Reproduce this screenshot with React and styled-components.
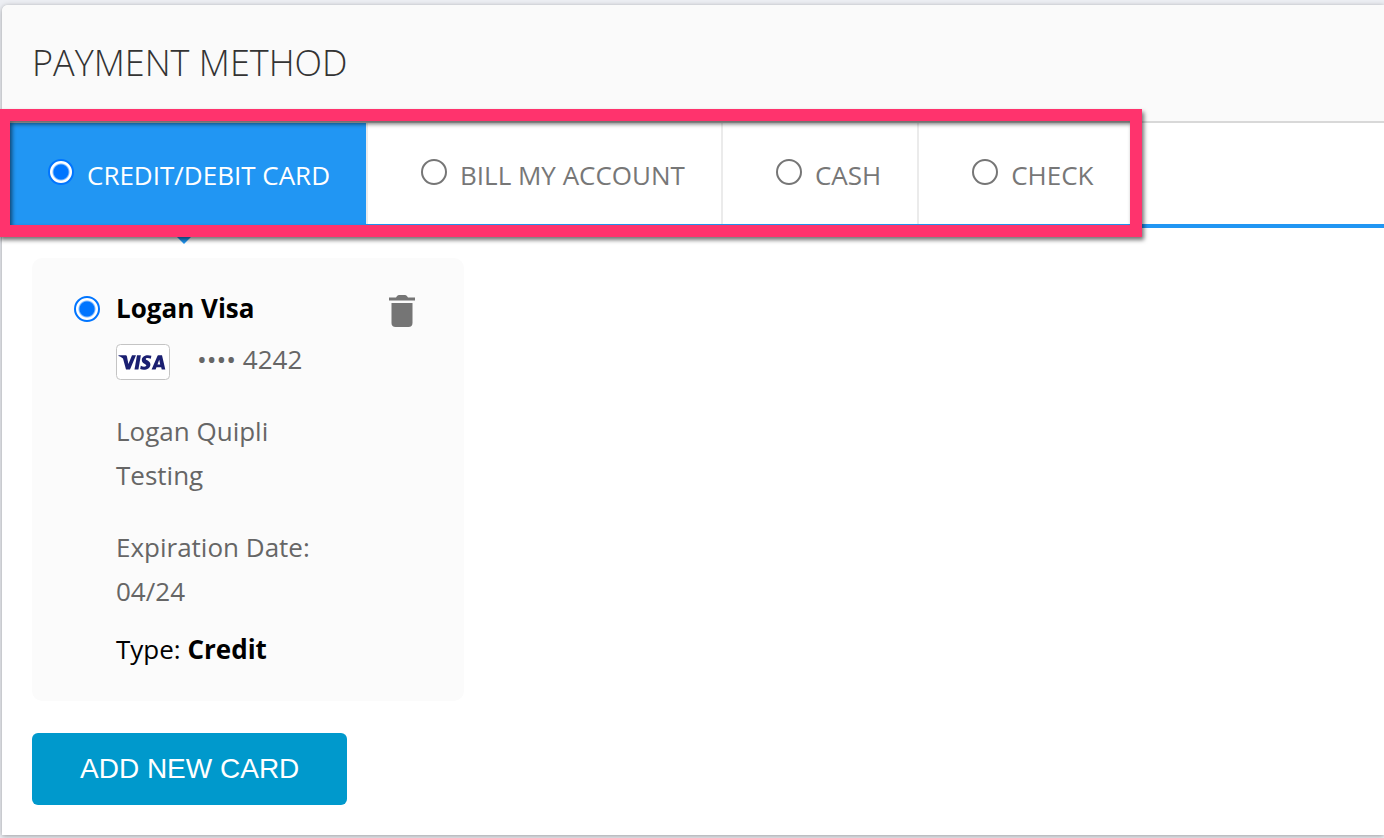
import React, { useState } from 'react';
import styled, { createGlobalStyle } from 'styled-components';

const GlobalStyle = createGlobalStyle`
	* {
		box-sizing: border-box;
	}
	body {
		margin: 0;
		background: #eceef3;
		font-family: "Open Sans", sans-serif;
		font-size: 26px;
		line-height: 44px;
		color: #666;
	}
`;

const Page = styled.main`
	padding: 5px 0 3px 2px;
	overflow: hidden;
`;

const Panel = styled.section`
	background: #fff;
	border-radius: 6px 0 0 0;
	box-shadow: 0 1px 5px rgba(0, 0, 0, 0.35);
`;

const PanelHeader = styled.header`
	background: #fafafa;
	border-bottom: 2px solid #d8d8d8;
	border-radius: 6px 0 0 0;
	padding: 36px 30px;
`;

const Title = styled.h2`
	margin: 0;
	font-size: 36px;
	line-height: 44px;
	font-weight: 300;
	color: #333;
	text-transform: uppercase;
`;

const TabBar = styled.div`
	position: relative;
	display: flex;
	border-bottom: 4px solid #2196f3;
`;

const Tab = styled.label`
	position: relative;
	display: flex;
	align-items: center;
	gap: 13px;
	height: 101px;
	padding: 3px 36px 0 53px;
	border-right: 2px solid #ebebeb;
	color: ${props => (props.$active ? '#fff' : '#777')};
	background: ${props => (props.$active ? '#2196f3' : '#fff')};
	background-clip: padding-box;
	text-transform: uppercase;
	white-space: nowrap;
	cursor: pointer;
	&:first-of-type {
		padding-left: 46px;
	}
	&:last-of-type {
		border-right: none;
	}
	&::after {
		content: "";
		display: ${props => (props.$active ? 'block' : 'none')};
		position: absolute;
		top: 100%;
		left: 50%;
		margin-left: -20px;
		border: 20px solid transparent;
		border-top-color: #2196f3;
		border-bottom: none;
	}
`;

const Radio = styled.input`
	appearance: none;
	flex: none;
	width: 26px;
	height: 26px;
	margin: 0;
	border: 2px solid #767676;
	border-radius: 50%;
	background: #fff;
	&:checked {
		border-color: #0075ff;
		background: radial-gradient(circle, #0075ff 7px, #fff 9px);
	}
`;

const TabRadio = styled(Radio)`
	margin-bottom: 6px;
`;

const Highlight = styled.div`
	position: absolute;
	top: -14px;
	left: -4px;
	width: 1144px;
	height: 128px;
	border: 12px solid #ff336d;
	filter: drop-shadow(2px 3px 2px rgba(0, 0, 0, 0.55));
	pointer-events: none;
`;

const PanelBody = styled.div`
	padding: 30px;
`;

const Card = styled.article`
	display: flex;
	align-items: flex-start;
	gap: 16px;
	width: 432px;
	max-width: 100%;
	padding: 28px 49px 30px 42px;
	background: #fbfbfb;
	border-radius: 10px;
`;

const CardRadio = styled(Radio)`
	margin-top: 10px;
`;

const Details = styled.div`
	flex: 1;
	min-width: 0;
`;

const CardName = styled.label`
	display: block;
	font-weight: 700;
	color: #000;
`;

const NumberRow = styled.div`
	display: flex;
	align-items: center;
	gap: 27px;
	margin: 7px 0 28px;
`;

const VisaLogo = styled.svg`
	flex: none;
	width: 54px;
	height: 36px;
	margin-top: 6px;
`;

const Holder = styled.p`
	width: 200px;
	margin: 0 0 28px;
`;

const Expiration = styled.p`
	width: 200px;
	margin: 0 0 14px;
`;

const CardType = styled.p`
	margin: 0;
	color: #000;
`;

const DeleteButton = styled.button`
	display: flex;
	margin: 9px 0 0;
	padding: 0;
	border: none;
	background: transparent;
	color: #757575;
	cursor: pointer;
`;

const AddButton = styled.button`
	display: block;
	margin-top: 32px;
	padding: 14px 48px;
	border: none;
	border-radius: 6px;
	background: #0099cc;
	color: #fff;
	font-family: "Liberation Sans", Arial, sans-serif;
	font-size: 28px;
	line-height: 44px;
	text-transform: uppercase;
	cursor: pointer;
`;

const methods = ['Credit/Debit Card', 'Bill My Account', 'Cash', 'Check'];

const Visa = () => (
	<VisaLogo viewBox="0 0 54 36" role="img" aria-label="Visa">
		<rect x="0.5" y="0.5" width="53" height="35" rx="4" fill="#fff" stroke="#c4c4c4" />
		<g fill="#1a1f71">
			<path d="M2.500 11.300h6.700c1 0 1.600.5 1.800 1.400l1.400 7.400 3.600-8.800h4l-6 14.200H10L7 14.600C6.200 13.500 4.600 12.400 2.500 11.900z" />
			<path d="M21 11.300h3.900l-2.500 14.200h-3.900z" />
			<path d="M35.400 11.700l-.6 3.100c-2.600-1.100-5-.9-5 .2 0 1.300 4.600 1.800 4.600 5.400 0 4.800-6 6.300-10.200 4.600l.6-3.200c2.600 1.300 5.500 1 5.500-.3 0-1.500-4.500-1.700-4.500-5.400 0-4.400 5.100-5.900 9.600-4.400z" />
			<path fillRule="evenodd" d="M42.500 11.300h3.500l3.300 14.200h-3.600l-.5-2.200h-4.700l-.9 2.200h-4l5.600-12.900c.3-.8.700-1.300 1.300-1.300zm.7 4.500l-1.700 4.600h2.700z" />
		</g>
	</VisaLogo>
);

const TrashIcon = () => (
	<svg width="26" height="32" viewBox="0 0 26 32" fill="currentColor" aria-hidden="true">
		<path d="M0 2.500h7c1-1.600 1.600-2.500 3-2.500h6c1.400 0 2 .9 3 2.500h7v3H0z" />
		<path d="M2.500 8h21v20c0 2.500-1.500 4-4 4h-13c-2.500 0-4-1.500-4-4z" />
	</svg>
);

const App = () => {
	const [method, setMethod] = useState(methods[0]);

	return (
		<>
			<GlobalStyle />
			<Page>
				<Panel>
					<PanelHeader>
						<Title>Payment Method</Title>
					</PanelHeader>
					<TabBar>
						{methods.map(name => (
							<Tab key={name} $active={name === method}>
								<TabRadio
									type="radio"
									name="method"
									checked={name === method}
									onChange={() => setMethod(name)}
								/>
								<span>{name}</span>
							</Tab>
						))}
						<Highlight />
					</TabBar>
					<PanelBody>
						<Card>
							<CardRadio type="radio" name="card" id="card-4242" defaultChecked />
							<Details>
								<CardName htmlFor="card-4242">Logan Visa</CardName>
								<NumberRow>
									<Visa />
									<span>•••• 4242</span>
								</NumberRow>
								<Holder>Logan Quipli Testing</Holder>
								<Expiration>Expiration Date: 04/24</Expiration>
								<CardType>
									Type: <strong>Credit</strong>
								</CardType>
							</Details>
							<DeleteButton type="button" aria-label="Delete card">
								<TrashIcon />
							</DeleteButton>
						</Card>
						<AddButton type="button">Add New Card</AddButton>
					</PanelBody>
				</Panel>
			</Page>
		</>
	);
};

export default App;
